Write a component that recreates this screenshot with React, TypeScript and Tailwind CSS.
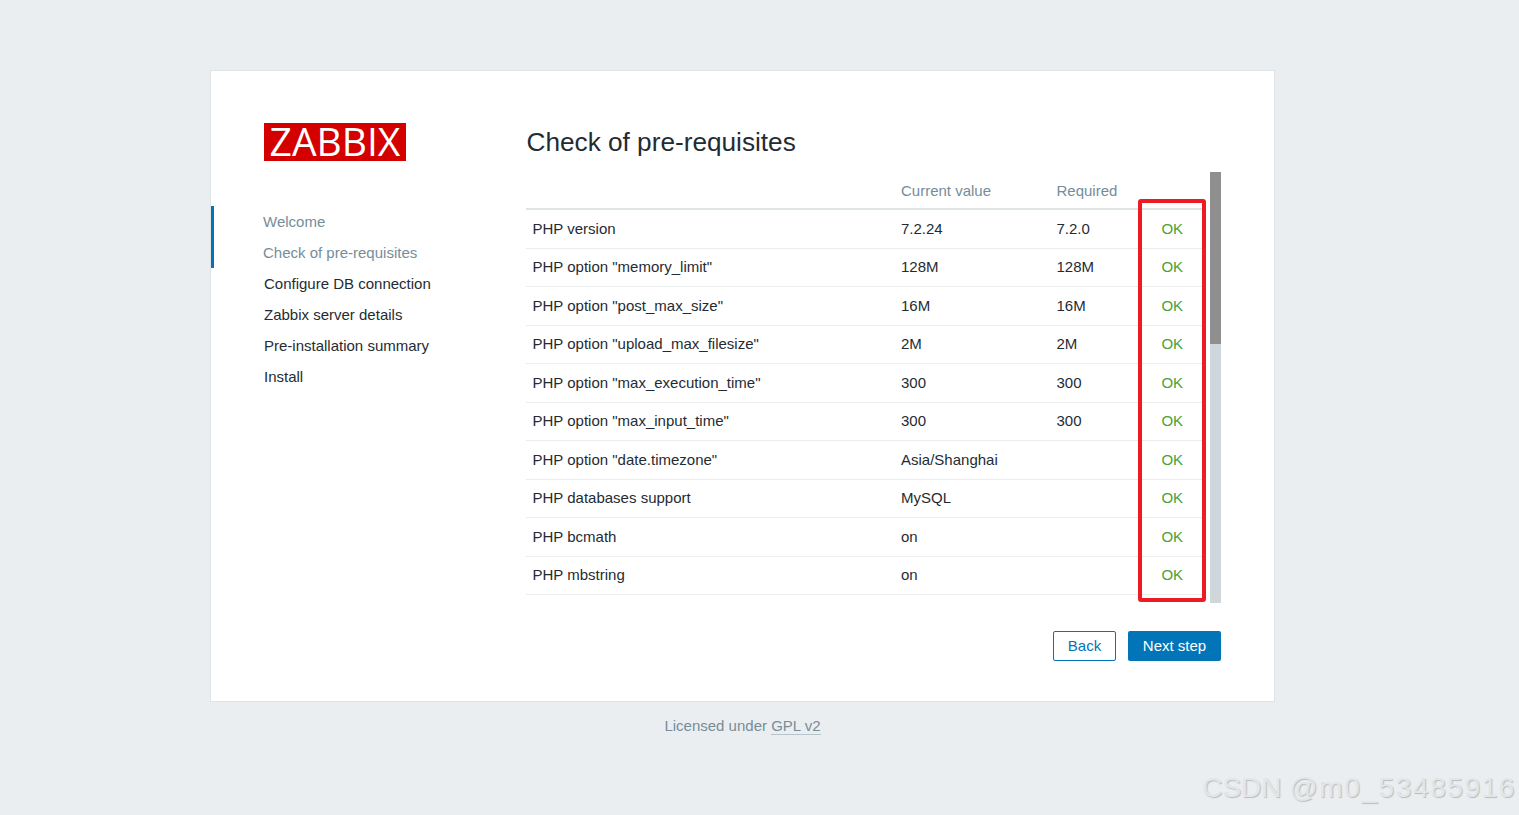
const rows = [
  ["PHP version", "7.2.24", "7.2.0"],
  ['PHP option "memory_limit"', "128M", "128M"],
  ['PHP option "post_max_size"', "16M", "16M"],
  ['PHP option "upload_max_filesize"', "2M", "2M"],
  ['PHP option "max_execution_time"', "300", "300"],
  ['PHP option "max_input_time"', "300", "300"],
  ['PHP option "date.timezone"', "Asia/Shanghai", ""],
  ["PHP databases support", "MySQL", ""],
  ["PHP bcmath", "on", ""],
  ["PHP mbstring", "on", ""],
];

const doneSteps = ["Welcome", "Check of pre-requisites"];
const nextSteps = [
  "Configure DB connection",
  "Zabbix server details",
  "Pre-installation summary",
  "Install",
];

export default function App() {
  return (
    <div className="relative min-h-[815px] overflow-hidden bg-[#ebeef0] pt-[70px] font-['Liberation_Sans',Arial,sans-serif] text-[15px] text-[#1f2c33]">
      <div className="ml-[210px] w-[1065px]">
        {/* CARD */}
        <div className="flex h-[632px] border border-[#dfe4e7] bg-white">
          {/* SIDEBAR */}
          <div className="w-[315px] shrink-0 pt-[52px]">
            <div className="ml-[53px] flex h-[38px] w-[142px] items-center justify-center bg-[#d40000] pb-[4px] font-['Open_Sans',sans-serif] text-[39px] leading-none text-white">
              ZABBIX
            </div>
            <div className="mt-[45px] border-l-[3px] border-[#0275b8] pl-[49px] text-[#768d99]">
              {doneSteps.map((step) => (
                <div key={step} className="flex h-[31px] items-center pt-[2px]">
                  {step}
                </div>
              ))}
            </div>
            <div className="pl-[53px]">
              {nextSteps.map((step) => (
                <div key={step} className="flex h-[31px] items-center pt-[2px]">
                  {step}
                </div>
              ))}
            </div>
          </div>

          {/* MAIN */}
          <div className="w-[695px] pt-[53px]">
            <h1 className="h-[48px] pl-[0.5px] text-[26.2px] leading-[36px]">Check of pre-requisites</h1>

            <div className="relative flex h-[431px] justify-between">
              <div className="w-[680px]">
                {/* TABLE HEADER */}
                <div className="grid h-[38px] grid-cols-[369px_155px_89px_67px] items-center border-b-2 border-[#dfe4e7] pt-[2px] text-[#768d99]">
                  <div />
                  <div className="pl-[6px]">Current value</div>
                  <div className="pl-[6.5px]">Required</div>
                  <div />
                </div>
                {rows.map((row) => (
                  <div
                    key={row[0]}
                    className="grid h-[38.5px] grid-cols-[369px_155px_89px_67px] items-center border-b border-[#ebeef0]"
                  >
                    <div className="pl-[6.5px]">{row[0]}</div>
                    <div className="pl-[6px]">{row[1]}</div>
                    <div className="pl-[6.5px]">{row[2]}</div>
                    <div className="pr-[0.5px] text-center text-[#4c9f3a]">OK</div>
                  </div>
                ))}
              </div>

              {/* SCROLLBAR */}
              <div className="w-[11px] bg-[#cfd7dc]">
                <div className="h-[172px] bg-[#8f8f8f]" />
              </div>

              {/* RED HIGHLIGHT */}
              <div className="absolute left-[612px] top-[27px] h-[403px] w-[68px] rounded-[3px] border-4 border-[#ed1c24]" />
            </div>

            {/* BUTTONS */}
            <div className="mt-[28px] flex justify-end gap-[12px]">
              <button className="h-[30px] w-[63px] rounded-[2px] border border-[#0275b8] bg-white text-[#0275b8]">
                Back
              </button>
              <button className="h-[30px] w-[93px] rounded-[2px] bg-[#0275b8] text-white">
                Next step
              </button>
            </div>
          </div>
        </div>

        {/* FOOTER */}
        <div className="mt-[13px] text-center text-[#768d99]">
          Licensed under{" "}
          <a className="border-b border-[#b8c4cc]">GPL v2</a>
        </div>
      </div>

      {/* WATERMARK */}
      <div className="absolute bottom-[9px] right-[3px] text-[28px] leading-[36px] text-[#e3e6e8] [text-shadow:1px_1px_1px_#b9bcbe]">
        CSDN <span className="tracking-[1.6px]">@m0_53485916</span>
      </div>
    </div>
  );
}
